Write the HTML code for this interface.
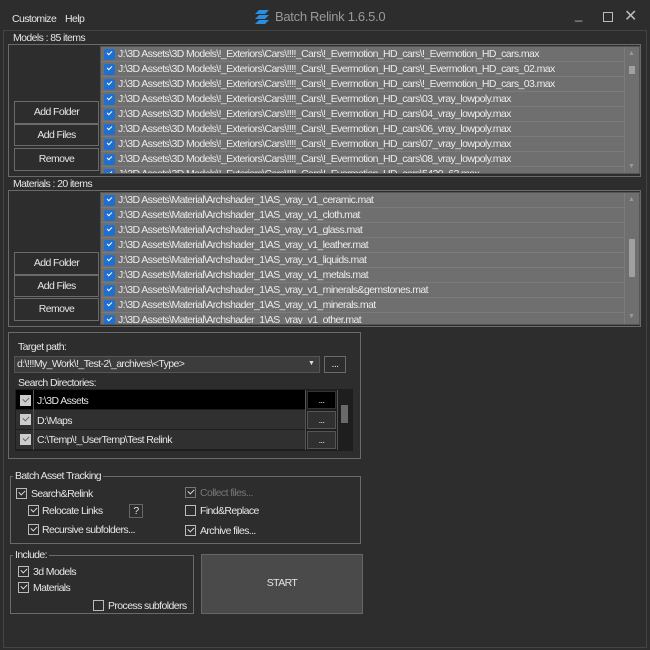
<!DOCTYPE html>
<html><head><meta charset="utf-8"><style>
*{margin:0;padding:0;box-sizing:border-box}
body{width:650px;height:650px;background:#2d2d2d;font-family:"Liberation Sans",Arial,sans-serif;font-size:10.5px;color:#e6e6e6;position:relative;overflow:hidden;letter-spacing:-0.6px}
.a{position:absolute;white-space:nowrap}
.fr{position:absolute;border:1px solid #6a6a6a}
.lbl{position:absolute;background:#2d2d2d;padding:0 2px;white-space:nowrap}
.btn{position:absolute;border:1px solid #6a6a6a;background:#2d2d2d;text-align:center;line-height:20px;color:#e6e6e6}
.list{position:absolute;background:#6f6f6f;overflow:hidden;border:1px solid #555}
.row{height:15px;border-bottom:1px solid #7b7b7b;position:relative;line-height:14px;padding-left:17px;color:#ececec;width:524px;overflow:hidden;white-space:nowrap}
.row i{position:absolute;left:3px;top:2px;width:11px;height:11px;background:#1e6fd0;border-radius:2px}
.row i:after{content:"";position:absolute;left:3px;top:2px;width:4px;height:2px;border-left:1px solid #fff;border-bottom:1px solid #fff;transform:rotate(-45deg)}
.sb{position:absolute;background:#6f6f6f;border-left:1px solid #7b7b7b}
.cb{position:absolute;width:11px;height:11px;border:1px solid #bbb}
.cb.c:after{content:"";position:absolute;left:2px;top:1px;width:5px;height:3px;border-left:1.3px solid #ddd;border-bottom:1.3px solid #ddd;transform:rotate(-45deg)}
.g:after{border-color:#666 !important}
</style></head><body>
<div style="position:absolute;left:3px;top:30px;width:644px;height:618px;border:1px solid #444"></div>
<div class="a" style="left:12px;top:13px">Customize</div>
<div class="a" style="left:65px;top:13px">Help</div>
<svg class="a" style="left:255px;top:9px" width="16" height="16" viewBox="0 0 16 16"><path d="M4 1h10L10 5H0z M4 6h10L10 10H0z M4 11h10L10 15H0z" fill="#2a8fe0"/></svg>
<div class="a" style="left:275px;top:9px;font-size:13px;color:#9a9a9a;letter-spacing:-0.3px">Batch Relink 1.6.5.0</div>
<div class="a" style="left:575px;top:7px;color:#bbb;font-size:13px">_</div>
<div class="a" style="left:603px;top:12px;width:10px;height:10px;border:1px solid #bbb"></div>
<div class="a" style="left:624px;top:6px;color:#bbb;font-size:16px">✕</div>

<div class="fr" style="left:8px;top:44px;width:633px;height:133px"></div>
<div class="lbl" style="left:11px;top:32px">Models : 85 items</div>
<div class="list" style="left:100px;top:46px;width:540px;height:128px">
<div class="row"><i></i>J:\3D Assets\3D Models\!_Exteriors\Cars\!!!!_Cars\!_Evermotion_HD_cars\!_Evermotion_HD_cars.max</div>
<div class="row"><i></i>J:\3D Assets\3D Models\!_Exteriors\Cars\!!!!_Cars\!_Evermotion_HD_cars\!_Evermotion_HD_cars_02.max</div>
<div class="row"><i></i>J:\3D Assets\3D Models\!_Exteriors\Cars\!!!!_Cars\!_Evermotion_HD_cars\!_Evermotion_HD_cars_03.max</div>
<div class="row"><i></i>J:\3D Assets\3D Models\!_Exteriors\Cars\!!!!_Cars\!_Evermotion_HD_cars\03_vray_lowpoly.max</div>
<div class="row"><i></i>J:\3D Assets\3D Models\!_Exteriors\Cars\!!!!_Cars\!_Evermotion_HD_cars\04_vray_lowpoly.max</div>
<div class="row"><i></i>J:\3D Assets\3D Models\!_Exteriors\Cars\!!!!_Cars\!_Evermotion_HD_cars\06_vray_lowpoly.max</div>
<div class="row"><i></i>J:\3D Assets\3D Models\!_Exteriors\Cars\!!!!_Cars\!_Evermotion_HD_cars\07_vray_lowpoly.max</div>
<div class="row"><i></i>J:\3D Assets\3D Models\!_Exteriors\Cars\!!!!_Cars\!_Evermotion_HD_cars\08_vray_lowpoly.max</div>
<div class="row"><i></i>J:\3D Assets\3D Models\!_Exteriors\Cars\!!!!_Cars\!_Evermotion_HD_cars\5420_62.max</div>
<div class="sb" style="right:0;top:0;width:15px;height:128px"><div class="a" style="left:4px;top:19px;width:6px;height:8px;background:#a0a0a0"></div><div class="a" style="left:3px;top:3px;color:#999;font-size:7px">▲</div><div class="a" style="left:3px;top:116px;color:#999;font-size:7px">▼</div></div>
</div>
<div class="btn" style="left:14px;top:101px;width:85px;height:23px">Add Folder</div>
<div class="btn" style="left:14px;top:124px;width:85px;height:22px">Add Files</div>
<div class="btn" style="left:14px;top:148px;width:85px;height:23px">Remove</div>

<div class="fr" style="left:8px;top:190px;width:633px;height:137px"></div>
<div class="lbl" style="left:11px;top:178px">Materials : 20 items</div>
<div class="list" style="left:100px;top:192px;width:540px;height:133px">
<div class="row"><i></i>J:\3D Assets\Material\Archshader_1\AS_vray_v1_ceramic.mat</div>
<div class="row"><i></i>J:\3D Assets\Material\Archshader_1\AS_vray_v1_cloth.mat</div>
<div class="row"><i></i>J:\3D Assets\Material\Archshader_1\AS_vray_v1_glass.mat</div>
<div class="row"><i></i>J:\3D Assets\Material\Archshader_1\AS_vray_v1_leather.mat</div>
<div class="row"><i></i>J:\3D Assets\Material\Archshader_1\AS_vray_v1_liquids.mat</div>
<div class="row"><i></i>J:\3D Assets\Material\Archshader_1\AS_vray_v1_metals.mat</div>
<div class="row"><i></i>J:\3D Assets\Material\Archshader_1\AS_vray_v1_minerals&amp;gemstones.mat</div>
<div class="row"><i></i>J:\3D Assets\Material\Archshader_1\AS_vray_v1_minerals.mat</div>
<div class="row"><i></i>J:\3D Assets\Material\Archshader_1\AS_vray_v1_other.mat</div>
<div class="sb" style="right:0;top:0;width:15px;height:133px"><div class="a" style="left:4px;top:46px;width:6px;height:38px;background:#a0a0a0"></div><div class="a" style="left:3px;top:3px;color:#999;font-size:7px">▲</div><div class="a" style="left:3px;top:120px;color:#999;font-size:7px">▼</div></div>
</div>
<div class="btn" style="left:14px;top:252px;width:85px;height:23px">Add Folder</div>
<div class="btn" style="left:14px;top:275px;width:85px;height:22px">Add Files</div>
<div class="btn" style="left:14px;top:298px;width:85px;height:23px">Remove</div>

<div class="fr" style="left:8px;top:332px;width:353px;height:127px"></div>
<div class="a" style="left:18px;top:341px">Target path:</div>
<div class="a" style="left:14px;top:356px;width:306px;height:17px;background:#3c3c3c;border:1px solid #555;line-height:15px;padding-left:2px">d:\!!!My_Work\!_Test-2\_archives\&lt;Type&gt;</div>
<div class="a" style="left:308px;top:360px;color:#ddd;font-size:7px">▼</div>
<div class="btn" style="left:324px;top:356px;width:22px;height:17px;line-height:14px">...</div>
<div class="a" style="left:18px;top:377px">Search Directories:</div>
<div class="a" style="left:15px;top:389px;width:338px;height:62px;background:#1e1e1e"></div>
<div class="a" style="left:16px;top:390px;width:290px;height:19px;background:#000"></div>
<div class="a" style="left:16px;top:410px;width:290px;height:19px;background:#303030"></div>
<div class="a" style="left:16px;top:430px;width:290px;height:19px;background:#303030"></div>
<div class="a" style="left:33px;top:390px;width:1px;height:60px;background:#555"></div>
<div class="a" style="left:305px;top:390px;width:1px;height:60px;background:#555"></div>
<div class="a" style="left:337px;top:390px;width:1px;height:60px;background:#555"></div>
<div class="cb c g" style="left:20px;top:395px;background:#ccc;border-color:#ccc"></div>
<div class="cb c g" style="left:20px;top:414px;background:#ccc;border-color:#ccc"></div>
<div class="cb c g" style="left:20px;top:434px;background:#ccc;border-color:#ccc"></div>
<div class="a" style="left:37px;top:395px">J:\3D Assets</div>
<div class="a" style="left:37px;top:415px">D:\Maps</div>
<div class="a" style="left:37px;top:434px">C:\Temp\!_UserTemp\Test Relink</div>
<div class="a" style="left:307px;top:391px;width:29px;height:18px;background:#000;border:1px solid #333;text-align:center;font-size:9px;line-height:16px">...</div>
<div class="a" style="left:307px;top:411px;width:29px;height:18px;background:#303030;border:1px solid #555;text-align:center;font-size:9px;line-height:16px">...</div>
<div class="a" style="left:307px;top:431px;width:29px;height:18px;background:#303030;border:1px solid #555;text-align:center;font-size:9px;line-height:16px">...</div>
<div class="a" style="left:341px;top:405px;width:7px;height:18px;background:#6a6a6a"></div>

<div class="fr" style="left:10px;top:476px;width:351px;height:68px"></div>
<div class="lbl" style="left:13px;top:470px">Batch Asset Tracking</div>
<div class="cb c" style="left:16px;top:488px"></div><div class="a" style="left:31px;top:488px">Search&amp;Relink</div>
<div class="cb c" style="left:28px;top:505px"></div><div class="a" style="left:42px;top:505px">Relocate Links</div>
<div class="a" style="left:129px;top:504px;width:14px;height:14px;border:1px solid #666;text-align:center;line-height:12px">?</div>
<div class="cb c" style="left:28px;top:524px"></div><div class="a" style="left:42px;top:524px">Recursive subfolders...</div>
<div class="cb c" style="left:185px;top:487px;border-color:#777"></div><div class="a" style="left:200px;top:487px;color:#777">Collect files...</div>
<div class="cb" style="left:185px;top:505px"></div><div class="a" style="left:200px;top:505px">Find&amp;Replace</div>
<div class="cb c" style="left:185px;top:525px"></div><div class="a" style="left:200px;top:525px">Archive files...</div>

<div class="fr" style="left:10px;top:555px;width:184px;height:59px"></div>
<div class="lbl" style="left:13px;top:549px">Include:</div>
<div class="cb c" style="left:18px;top:566px"></div><div class="a" style="left:33px;top:566px">3d Models</div>
<div class="cb c" style="left:18px;top:582px"></div><div class="a" style="left:33px;top:582px">Materials</div>
<div class="cb" style="left:93px;top:600px"></div><div class="a" style="left:108px;top:600px">Process subfolders</div>
<div class="a" style="left:201px;top:554px;width:162px;height:60px;background:#4a4a4a;border:1px solid #666;text-align:center;line-height:56px">START</div>
</body></html>
